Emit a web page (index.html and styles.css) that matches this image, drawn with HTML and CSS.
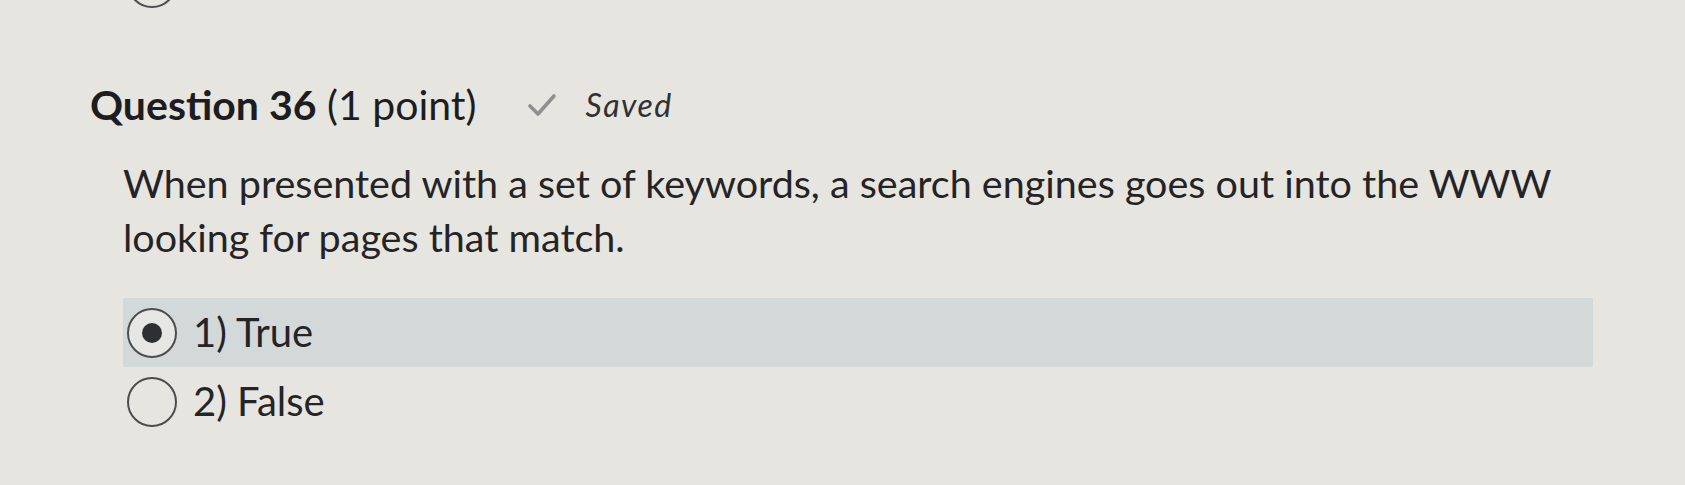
FILE: index.html
```html
<!DOCTYPE html>
<html lang="en">
<head>
<meta charset="utf-8">
<title>Question 36</title>
<link rel="stylesheet" href="styles.css">
</head>
<body>
<main class="page">
  <div class="prev-tail"><span class="radio"></span></div>
  <div class="q-head">
    <h2 class="q-title"><strong>Question 36</strong> (1 point)</h2>
    <svg class="check" width="30" height="24" viewBox="0 0 30 24" aria-hidden="true">
      <path d="M3 13 L11 21 L27 3" fill="none" stroke="#8f8f8f" stroke-width="3.6" stroke-linecap="round" stroke-linejoin="round"/>
    </svg>
    <span class="saved">Saved</span>
  </div>
  <div class="q-body">
    <p class="q-text">When presented with a set of keywords, a search engines goes out into the WWW looking for pages that match.</p>
    <ul class="options">
      <li class="option selected"><span class="radio"><span class="dot"></span></span><span class="label">1) True</span></li>
      <li class="option"><span class="radio"></span><span class="label">2) False</span></li>
    </ul>
  </div>
</main>
</body>
</html>
```

FILE: styles.css
```css
html, body {
  margin: 0;
  padding: 0;
}
body {
  background: #e7e5df;
  font-family: Lato, "Noto Sans", "Liberation Sans", sans-serif;
  color: #242427;
  width: 1685px;
  height: 485px;
  overflow: hidden;
}
.page {
  padding-left: 90px;
}
.prev-tail {
  margin-top: -42px;
  padding-left: 37px;
  height: 50px;
}
.radio {
  box-sizing: border-box;
  width: 50px;
  height: 50px;
  border-radius: 50%;
  border: 2.5px solid #4d4d4f;
  display: flex;
  align-items: center;
  justify-content: center;
  flex: none;
}
.prev-tail .radio {
  display: block;
}
.q-head {
  margin-top: 72px;
  display: flex;
  align-items: center;
  height: 50px;
}
.q-title {
  margin: 0;
  font-size: 41px;
  line-height: 50px;
  font-weight: 400;
  color: #1d1d21;
}
.q-title strong {
  font-weight: 700;
}
.check {
  margin-left: 50px;
  display: block;
}
.saved {
  margin-left: 29px;
  font-style: italic;
  font-size: 32px;
  letter-spacing: 1.5px;
  line-height: 36px;
  color: #303035;
}
.q-body {
  padding-left: 33px;
  padding-top: 26px;
}
.q-text {
  margin: 0;
  font-size: 39.5px;
  line-height: 54px;
  width: 1460px;
  color: #242427;
}
.options {
  list-style: none;
  margin: 34px 0 0 0;
  padding: 0;
  width: 1470px;
}
.option {
  height: 69px;
  display: flex;
  align-items: center;
  padding-left: 4px;
  font-size: 40px;
  line-height: 69px;
}
.option.selected {
  background: #d3d8d9;
}
.option.selected .radio {
  background: #e6e7e5;
}
.dot {
  width: 20px;
  height: 20px;
  border-radius: 50%;
  background: #2e2f31;
}
.label {
  margin-left: 16px;
}
```
